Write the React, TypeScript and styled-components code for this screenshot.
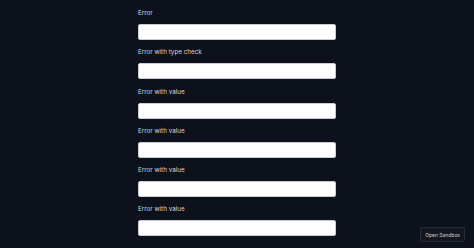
import React from "react";
import styled, { createGlobalStyle } from "styled-components";

const Global = createGlobalStyle`
  html, body { margin: 0; padding: 0; background: #0d111b; }
  body { font-family: Inter, "Noto Sans", sans-serif; }
  * { box-sizing: border-box; }
`;

const Page = styled.div`
  min-height: 248px;
  display: flex;
  justify-content: center;
  padding-top: 9px;
`;

const Form = styled.div`
  width: 198px;
  display: flex;
  flex-direction: column;
`;

const Field = styled.div`
  display: flex;
  flex-direction: column;
  gap: 7px;
  margin-bottom: 8.3px;
`;

const Label = styled.label`
  font-size: 6.3px;
  line-height: 8px;
  color: #d9d9d9;
`;

const Input = styled.input`
  height: 16px;
  width: 100%;
  background: #ffffff;
  border: 1px solid #c9ccd2;
  border-radius: 2px;
  outline: none;
  padding: 0 4px;
`;

const SandboxButton = styled.button`
  position: fixed;
  right: 9px;
  bottom: 6px;
  height: 15px;
  padding: 0 4px;
  background: #12161f;
  border: 1px solid #272c35;
  border-radius: 2px;
  color: #cfd0d3;
  font-family: Inter, "Noto Sans", sans-serif;
  font-size: 5px;
`;

const labels = [
  "Error",
  "Error with type check",
  "Error with value",
  "Error with value",
  "Error with value",
  "Error with value",
];

export default function App() {
  return (
    <>
      <Global />
      <Page>
        <Form>
          {labels.map((l, i) => (
            <Field key={i}>
              <Label>{l}</Label>
              <Input />
            </Field>
          ))}
        </Form>
      </Page>
      <SandboxButton>Open Sandbox</SandboxButton>
    </>
  );
}
